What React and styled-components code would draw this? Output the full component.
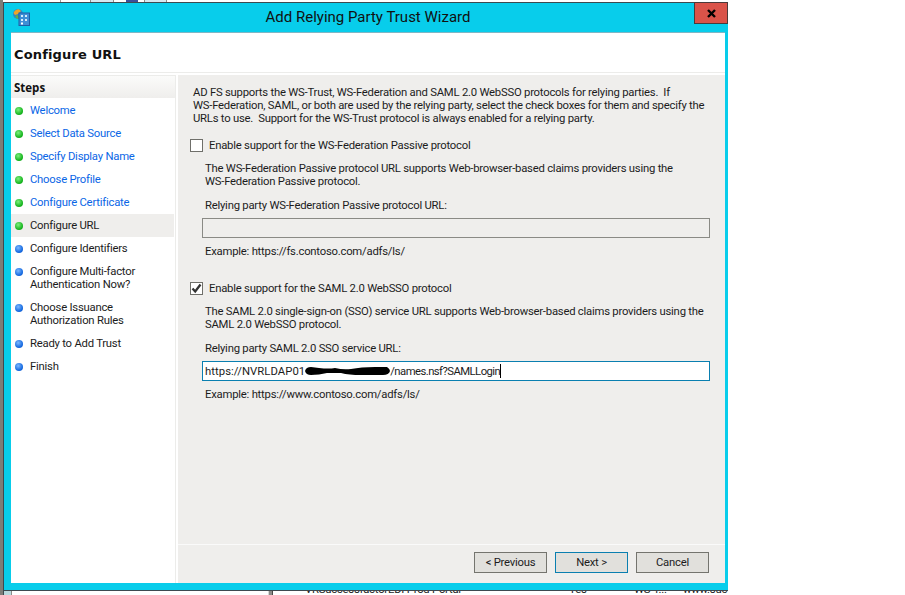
import styled, { createGlobalStyle } from "styled-components";

const GlobalStyle = createGlobalStyle`
	html, body {
		margin: 0;
		background: #fff;
	}
	body {
		font-family: Roboto, "Liberation Sans", sans-serif;
		font-size: 11.3px;
		letter-spacing: -0.23px;
		color: #1c1c1c;
	}
`;

const Page = styled.div`
	width: 905px;
	height: 595px;
	position: relative;
	overflow: hidden;
	background: #fff;
`;

const BehindLeft = styled.div`
	position: absolute;
	left: 0;
	top: 0;
	bottom: 0;
	width: 3px;
	background: #7d7d78;
`;

const BehindStrip = styled.div`
	position: absolute;
	left: 3px;
	top: ${(p) => p.$top}px;
	height: ${(p) => p.$height}px;
	display: flex;
`;

const StripPart = styled.div`
	width: ${(p) => p.$w}px;
	background: ${(p) => p.$bg};
`;

const BehindRow = styled.div`
	position: absolute;
	left: 305px;
	top: 583px;
	width: 423px;
	overflow: hidden;
	display: grid;
	grid-template-columns: 264px 65px 49px 45px;
	white-space: nowrap;
`;

const Window = styled.div`
	position: absolute;
	left: 3px;
	top: 2px;
	width: 725px;
	height: 589px;
	box-sizing: border-box;
	border: 1px solid #3c4a50;
	border-right-width: 0;
	background: #08cdeb;
	display: flex;
	flex-direction: column;
`;

const TitleBar = styled.div`
	height: 29px;
	position: relative;
	display: flex;
	align-items: center;
	justify-content: center;
	flex-shrink: 0;
`;

const TitleIcon = styled.svg`
	position: absolute;
	left: 9px;
	top: 6px;
	width: 17px;
	height: 17px;
`;

const TitleText = styled.div`
	font-size: 15px;
	letter-spacing: 0;
	color: #111;
	padding: 0 0 2px 4px;
`;

const CloseButton = styled.div`
	position: absolute;
	right: 0;
	top: -1px;
	width: 34px;
	height: 22px;
	box-sizing: border-box;
	border: 1px solid #4a3a3a;
	background: #da5349;
	display: flex;
	align-items: center;
	justify-content: center;
`;

const Client = styled.div`
	flex: 1;
	margin: 0 3px 7px 7px;
	background: #fff;
	border-top: 1px solid #7fb6c4;
	display: flex;
	flex-direction: column;
	min-height: 0;
`;

const Header = styled.div`
	height: 40px;
	box-sizing: border-box;
	display: flex;
	align-items: center;
	padding: 3px 0 0 3px;
	font-family: "DejaVu Sans", sans-serif;
	font-weight: 700;
	font-size: 13px;
	letter-spacing: 0.15px;
	border-bottom: 1px solid #ececea;
	color: #111;
`;

const Body = styled.div`
	flex: 1;
	display: flex;
	margin-top: 2px;
	min-height: 0;
`;

const Sidebar = styled.div`
	width: 165px;
	box-sizing: border-box;
	flex-shrink: 0;
	border-right: 1px solid #ececea;
	border-top: 1px solid #ececea;
`;

const StepsHead = styled.div`
	height: 22px;
	padding-left: 3px;
	display: flex;
	align-items: center;
	font-family: "Open Sans", sans-serif;
	font-weight: 700;
	font-size: 11.5px;
	letter-spacing: 0;
	background: linear-gradient(#fbfbfa, #efeeec);
	color: #111;
`;

const StepList = styled.div`
	display: flex;
	flex-direction: column;
	padding-top: 1px;
`;

const StepRow = styled.div`
	display: flex;
	align-items: flex-start;
	gap: 7px;
	padding: 5px 0 5px 4px;
	margin-right: 1px;
	line-height: 13px;
	background: ${(p) => (p.$active ? "#efeeec" : "transparent")};
	color: ${(p) => (p.$link ? "#0a66e6" : "#1c1c1c")};
`;

const Dot = styled.span`
	width: 8px;
	height: 8px;
	margin-top: 3px;
	flex-shrink: 0;
	border-radius: 50%;
	background: ${(p) =>
		p.$done
			? "radial-gradient(circle at 40% 35%, #7df07d, #16b41e 65%, #0f9a18)"
			: "radial-gradient(circle at 40% 35%, #7db8ff, #1569e0 65%, #0f55c0)"};
`;

const Main = styled.div`
	flex: 1;
	background: #efeeec;
	margin-left: 2px;
	display: flex;
	flex-direction: column;
	min-width: 0;
`;

const Content = styled.div`
	flex: 1;
	padding: 11px 14px 0 15px;
	line-height: 13px;
	white-space: nowrap;
`;

const Para = styled.p`
	margin: 0;
`;

const Section = styled.div`
	margin-top: ${(p) => p.$top}px;
`;

const CheckRow = styled.div`
	display: flex;
	align-items: center;
	gap: 6px;
	margin-left: -3px;
`;

const CheckBox = styled.span`
	width: 13px;
	height: 13px;
	box-sizing: border-box;
	border: 1px solid #6f6f6a;
	background: #fff;
	display: flex;
	align-items: center;
	justify-content: center;
`;

const Indented = styled.div`
	margin-left: 12px;
`;

const Hint = styled.p`
	margin: 10px 0 0;
`;

const FieldLabel = styled.p`
	margin: 11px 0 0;
`;

const Field = styled.div`
	margin: 6px 0 0 -3px;
	height: 20px;
	width: 508px;
	box-sizing: border-box;
	padding-left: 2px;
	display: flex;
	align-items: center;
	border: 1px solid ${(p) => (p.$focus ? "#0a7fb0" : "#8a8a85")};
	background: ${(p) => (p.$focus ? "#fff" : "#efeeec")};
`;

const UrlPart = styled.span`
	letter-spacing: ${(p) => p.$spacing}px;
`;

const Redaction = styled.svg`
	width: 85px;
	height: 10px;
	flex-shrink: 0;
`;

const Caret = styled.span`
	width: 1px;
	height: 14px;
	background: #000;
`;

const Example = styled.p`
	margin: 7px 0 0;
`;

const Footer = styled.div`
	height: 39px;
	box-sizing: border-box;
	border-top: 1px solid #fafafa;
	display: flex;
	justify-content: flex-end;
	align-items: flex-start;
	gap: 8px;
	padding: 7px 16px 0 0;
`;

const Button = styled.div`
	width: 73px;
	height: 21px;
	box-sizing: border-box;
	border: 1px solid ${(p) => (p.$default ? "#0a7fb0" : "#74746e")};
	background: #e1e0dc;
	display: flex;
	align-items: center;
	justify-content: center;
	color: #1c1c1c;
`;

const completedSteps = [
	"Welcome",
	"Select Data Source",
	"Specify Display Name",
	"Choose Profile",
	"Configure Certificate",
];

const pendingSteps = [
	["Configure Identifiers"],
	["Configure Multi-factor", "Authentication Now?"],
	["Choose Issuance", "Authorization Rules"],
	["Ready to Add Trust"],
	["Finish"],
];

const topStrip = [
	[57, "#fff"],
	[1, "#9a9a96"],
	[29, "#fff"],
	[1, "#8c8c88"],
	[22, "#d6e8f0"],
	[1, "#8c8c88"],
	[12, "#fff"],
	[12, "#3c4f9a"],
	[6, "#fff"],
	[1, "#8c8c88"],
	[21, "#d6e8f0"],
	[1, "#8c8c88"],
];

const bottomStrip = [
	[1, "#3c4a50"],
	[7, "#b9d9dd"],
	[1, "#8c8c88"],
	[256, "#fff"],
	[1, "#d8d8d6"],
	[3, "#8c8c88"],
	[1, "#4a4a48"],
];

function WizardIcon() {
	return (
		<TitleIcon viewBox="0 0 17 17">
			<circle cx="5" cy="5" r="5" fill="#2f86c8" />
			<path d="M0.5 4 Q2 0 6 0.2 L8 2 L5 5 L2 6 Z" fill="#eda52a" />
			<path d="M2 7 L5 6 L6 10 L3.5 9.5 Z" fill="#5fae4a" />
			<rect x="6" y="4" width="10.5" height="12.5" fill="#3f8fd6" stroke="#1f5fa5" strokeWidth="1" />
			<rect x="8" y="6" width="2" height="2" fill="#d8ecfa" />
			<rect x="12" y="6" width="2" height="2" fill="#d8ecfa" />
			<rect x="8" y="10" width="2" height="2" fill="#d8ecfa" />
			<rect x="12" y="10" width="2" height="2" fill="#d8ecfa" />
			<rect x="8" y="13.5" width="2" height="2" fill="#fff" />
		</TitleIcon>
	);
}

export default function App() {
	return (
		<Page>
			<GlobalStyle />
			<BehindLeft />
			<BehindStrip $top={0} $height={2}>
				{topStrip.map(([w, bg], i) => (
					<StripPart key={i} $w={w} $bg={bg} />
				))}
			</BehindStrip>
			<BehindStrip $top={591} $height={4}>
				{bottomStrip.map(([w, bg], i) => (
					<StripPart key={i} $w={w} $bg={bg} />
				))}
			</BehindStrip>
			<BehindRow>
				<span>VRSuccessfactorEDI Prod Portal</span>
				<span>Yes</span>
				<span>WS-T...</span>
				<span>www.suc</span>
			</BehindRow>
			<Window>
				<TitleBar>
					<WizardIcon />
					<TitleText>Add Relying Party Trust Wizard</TitleText>
					<CloseButton>
						<svg width="9" height="9" viewBox="0 0 9 9">
							<path d="M1 1 L8 8 M8 1 L1 8" stroke="#000" strokeWidth="2.4" />
						</svg>
					</CloseButton>
				</TitleBar>
				<Client>
					<Header>Configure URL</Header>
					<Body>
						<Sidebar>
							<StepsHead>Steps</StepsHead>
							<StepList>
								{completedSteps.map((step) => (
									<StepRow key={step} $link>
										<Dot $done />
										<span>{step}</span>
									</StepRow>
								))}
								<StepRow $active>
									<Dot $done />
									<span>Configure URL</span>
								</StepRow>
								{pendingSteps.map((lines) => (
									<StepRow key={lines[0]}>
										<Dot />
										<span>
											{lines.map((line) => (
												<div key={line}>{line}</div>
											))}
										</span>
									</StepRow>
								))}
							</StepList>
						</Sidebar>
						<Main>
							<Content>
								<Para>
									AD FS supports the WS-Trust, WS-Federation and SAML 2.0 WebSSO protocols for relying parties.&nbsp; If
									<br />
									WS-Federation, SAML, or both are used by the relying party, select the check boxes for them and specify the
									<br />
									URLs to use.&nbsp; Support for the WS-Trust protocol is always enabled for a relying party.
								</Para>
								<Section $top={14}>
									<CheckRow>
										<CheckBox />
										Enable support for the WS-Federation Passive protocol
									</CheckRow>
									<Indented>
										<Hint>
											The WS-Federation Passive protocol URL supports Web-browser-based claims providers using the
											<br />
											WS-Federation Passive protocol.
										</Hint>
										<FieldLabel>Relying party WS-Federation Passive protocol URL:</FieldLabel>
										<Field />
										<Example>Example: https://fs.contoso.com/adfs/ls/</Example>
									</Indented>
								</Section>
								<Section $top={24}>
									<CheckRow>
										<CheckBox>
											<svg width="11" height="11" viewBox="0 0 11 11">
												<path d="M1.5 5.5 L4.2 8.5 L9.5 1.5" fill="none" stroke="#333" strokeWidth="2.3" />
											</svg>
										</CheckBox>
										Enable support for the SAML 2.0 WebSSO protocol
									</CheckRow>
									<Indented>
										<Hint>
											The SAML 2.0 single-sign-on (SSO) service URL supports Web-browser-based claims providers using the
											<br />
											SAML 2.0 WebSSO protocol.
										</Hint>
										<FieldLabel>Relying party SAML 2.0 SSO service URL:</FieldLabel>
										<Field $focus>
											<UrlPart $spacing={0.05}>https://NVRLDAP01</UrlPart>
											<Redaction viewBox="0 0 85 10">
												<path d="M0 5 Q1 1 6 1 L14 2 Q24 3 30 2 Q38 4 46 3 Q56 1 70 1 L82 1 Q85 3 85 5 Q84 9 78 9 L56 9 Q44 9 36 7 L22 7 Q14 9 6 9 Q1 9 0 5 Z" fill="#000" />
											</Redaction>
											<UrlPart $spacing={-0.55}>/names.nsf?SAMLLogin</UrlPart>
											<Caret />
										</Field>
										<Example>Example: https://www.contoso.com/adfs/ls/</Example>
									</Indented>
								</Section>
							</Content>
							<Footer>
								<Button>&lt; Previous</Button>
								<Button $default>Next &gt;</Button>
								<Button>Cancel</Button>
							</Footer>
						</Main>
					</Body>
				</Client>
			</Window>
		</Page>
	);
}
